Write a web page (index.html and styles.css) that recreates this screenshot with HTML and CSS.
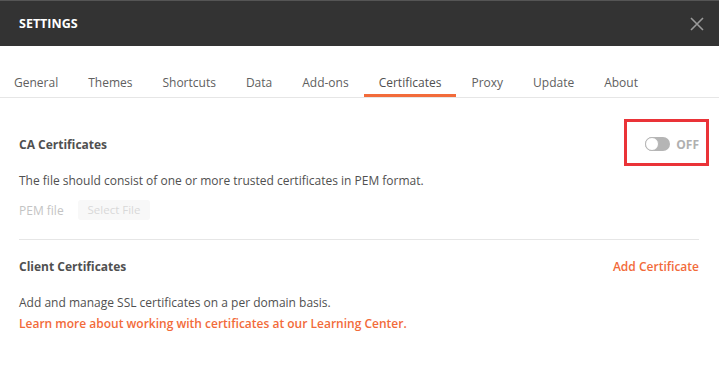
FILE: index.html
```html
<!DOCTYPE html>
<html>
<head>
<meta charset="utf-8">
<link rel="stylesheet" href="styles.css">
</head>
<body>
<div class="modal">
  <div class="header">
    <span class="title">SETTINGS</span>
    <svg class="close" width="14" height="14" viewBox="0 0 14 14"><path d="M1 1L13 13M13 1L1 13" stroke="#9a9a9a" stroke-width="1.6" fill="none"/></svg>
  </div>
  <div class="tabs">
    <div class="tab">General</div>
    <div class="tab">Themes</div>
    <div class="tab">Shortcuts</div>
    <div class="tab">Data</div>
    <div class="tab">Add-ons</div>
    <div class="tab active">Certificates</div>
    <div class="tab">Proxy</div>
    <div class="tab">Update</div>
    <div class="tab">About</div>
  </div>
  <div class="section ca">
    <div class="row">
      <span class="heading">CA Certificates</span>
      <div class="toggle-wrap">
        <span class="toggle"><span class="knob"></span></span>
        <span class="off">OFF</span>
        <span class="highlight"></span>
      </div>
    </div>
    <p class="desc">The file should consist of one or more trusted certificates in PEM format.</p>
    <div class="pem">
      <span class="pem-label">PEM file</span>
      <span class="select-btn">Select File</span>
    </div>
  </div>
  <div class="section client">
    <div class="row">
      <span class="heading">Client Certificates</span>
      <span class="add">Add Certificate</span>
    </div>
    <p class="desc desc2">Add and manage SSL certificates on a per domain basis.</p>
    <p class="link">Learn more about working with certificates at our Learning Center.</p>
  </div>
</div>
</body>
</html>
```
FILE: styles.css
```css
html, body {
  margin: 0;
  padding: 0;
  background: #fff;
}
body {
  font-family: "Open Sans", "Noto Sans", sans-serif;
  font-size: 12px;
  color: #505050;
  width: 719px;
  height: 375px;
  overflow: hidden;
}
.header {
  height: 45px;
  background: #333333;
  border-top: 1px solid #555;
  display: flex;
  align-items: center;
  justify-content: space-between;
  padding: 0 15px 0 19px;
}
.title {
  color: #fff;
  font-weight: 700;
  font-size: 12.5px;
}
.tabs {
  display: flex;
  border-bottom: 1px solid #e6e6e6;
}
.tab {
  padding: 28px 15px 2px;
  line-height: 18px;
  color: #606060;
  border-bottom: 3px solid transparent;
  white-space: nowrap;
}
.tab:first-child {
  padding-left: 14px;
}
.tab.active {
  border-bottom-color: #f26b3a;
  color: #505050;
}
.section {
  margin: 0 20px 0 19px;
}
.ca {
  padding-top: 36px;
  padding-bottom: 19px;
  border-bottom: 1px solid #e6e6e6;
}
.row {
  display: flex;
  align-items: center;
  justify-content: space-between;
  height: 20px;
}
.heading {
  font-weight: 700;
  color: #505050;
}
.toggle-wrap {
  position: relative;
  display: flex;
  align-items: center;
}
.toggle {
  width: 25px;
  height: 14px;
  border-radius: 7px;
  background: #b5b5b5;
  position: relative;
  display: inline-block;
}
.knob {
  position: absolute;
  left: 0;
  top: 0;
  width: 12px;
  height: 12px;
  border: 1px solid #b5b5b5;
  border-radius: 50%;
  background: #fff;
}
.off {
  margin-left: 6px;
  font-weight: 700;
  color: #b0b0b0;
  font-size: 12px;
}
.highlight {
  position: absolute;
  left: -21px;
  top: -17px;
  width: 79px;
  height: 41px;
  border: 3px solid #ea3338;
}
.desc {
  margin: 18px 0 0;
  line-height: 18px;
}
.pem {
  display: flex;
  align-items: center;
  margin-top: 10px;
}
.pem-label {
  color: #c4c4c4;
  width: 59px;
}
.select-btn {
  display: inline-block;
  height: 20px;
  line-height: 20px;
  width: 72px;
  text-align: center;
  background: #f8f8f8;
  border-radius: 3px;
  color: #d8d8d8;
  font-size: 11.5px;
}
.client {
  padding-top: 16px;
}
.add {
  color: #f26b3a;
  font-weight: 600;
}
.desc2 {
  margin-top: 16px;
  line-height: 21px;
}
.link {
  margin: 0;
  line-height: 21px;
  color: #f26b3a;
  font-weight: 600;
}
```
